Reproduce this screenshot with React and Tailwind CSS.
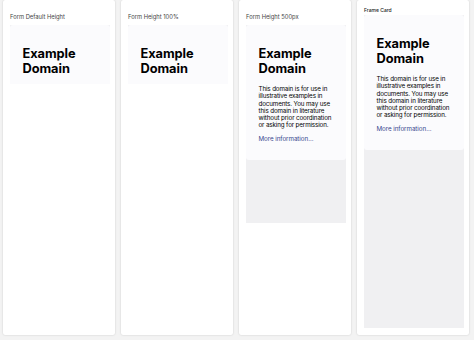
import React from 'react';

// превью example.com, уменьшенное примерно в 0.39
function ExampleDomain({ className }) {
  return (
    <div className={`w-[100px] overflow-hidden bg-[#f0f0f2] font-['Inter',sans-serif] text-black ${className}`}>
      <div className="bg-[#fbfbfd] rounded-[3px] px-[12.5px] pt-[12px] pb-[10px]">
        <h1 className="text-[12.8px] leading-[15px] font-bold mt-[8.6px] mb-[10.5px] tracking-[-0.05px]">Example Domain</h1>
        <p className="text-[6.24px] leading-[7.2px] my-[6.24px] tracking-[-0.12px] -mr-[3px]">
          This domain is for use in illustrative examples in documents. You may use this domain in literature
          without prior coordination or asking for permission.
        </p>
        <p className="text-[6.24px] leading-[7.2px] mt-[7px] mb-[6.24px] tracking-[-0.05px]">
          <a href="#" className="text-[#38488f]">More information...</a>
        </p>
      </div>
    </div>
  );
}

function Card({ label, children }) {
  return (
    <div className="w-[112px] h-[335px] bg-white rounded-[2px] shadow-[0_0_2px_rgba(0,0,0,0.18)] px-[7px] pt-[13px]">
      <div className="text-[5.8px] leading-[8px] text-[#444] font-['Inter',sans-serif] mb-[4px]">{label}</div>
      {children}
    </div>
  );
}

export default function App() {
  return (
    <div className="w-[474px] h-[340px] bg-[#f3f3f3] pl-[3px] pr-[5px] flex gap-[6px] overflow-hidden">
      <Card label="Form Default Height">
        <ExampleDomain className="h-[59px]" />
      </Card>
      <Card label="Form Height 100%">
        <ExampleDomain className="h-[59px]" />
      </Card>
      <Card label="Form Height 500px">
        <ExampleDomain className="h-[198px]" />
      </Card>
      <div className="w-[112px] h-[335px] bg-white rounded-[2px] shadow-[0_0_2px_rgba(0,0,0,0.18)] px-[7px] pt-[7px]">
        <div className="text-[5px] leading-[6px] text-[#222] font-medium font-['Inter',sans-serif] mb-[2px]">Frame Card</div>
        <ExampleDomain className="h-[313px]" />
      </div>
    </div>
  );
}
